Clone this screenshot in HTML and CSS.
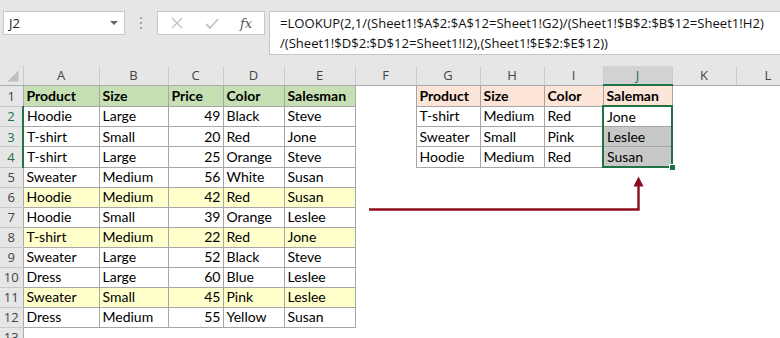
FILE: index.html
```html
<!DOCTYPE html>
<html>
	<head>
		<meta charset="UTF-8">
		<title>LOOKUP</title>
		<link rel="stylesheet" href="styles.css">
	</head>

	<body>
		<div class='app'>
			<div class='formula-bar'>
				<div class='namebox'>
					<span>J2</span>
					<svg class='caret' width='8' height='4' viewBox='0 0 8 4'><path d='M0 0H8L4 4Z' fill='#666'/></svg>
				</div>
				<div class='grip'>
					<svg width='3' height='13' viewBox='0 0 3 13'>
						<rect x='0' y='0' width='2' height='2' fill='#a8a8a8'/>
						<rect x='0' y='5' width='2' height='2' fill='#a8a8a8'/>
						<rect x='0' y='10' width='2' height='2' fill='#a8a8a8'/>
					</svg>
				</div>
				<div class='fxbox'>
					<svg width='12' height='12' viewBox='0 0 12 12'><path d='M1 1L11 11M11 1L1 11' stroke='#c4c4c4' stroke-width='1.4'/></svg>
					<svg width='14' height='11' viewBox='0 0 14 11'><path d='M1 6L5 10L13 1' stroke='#c4c4c4' stroke-width='1.8' fill='none'/></svg>
					<span class='fx'>fx</span>
				</div>
				<div class='formula'>=LOOKUP(2,1/(Sheet1!$A$2:$A$12=Sheet1!G2)/(Sheet1!$B$2:$B$12=Sheet1!H2)<br>/(Sheet1!$D$2:$D$12=Sheet1!I2),(Sheet1!$E$2:$E$12))</div>
			</div>

			<div class='grid-wrap'>
				<table class='sheet'>
					<colgroup>
						<col style='width:23px'><col style='width:76px'><col style='width:69px'><col style='width:55px'>
						<col style='width:61px'><col style='width:71px'><col style='width:61px'><col style='width:64px'>
						<col style='width:64px'><col style='width:59px'><col style='width:69px'><col style='width:64px'>
						<col style='width:64px'>
					</colgroup>
					<tr class='heads'>
						<th class='corner'><span class='tri'></span></th>
						<th>A</th><th>B</th><th>C</th><th>D</th><th>E</th><th>F</th>
						<th>G</th><th>H</th><th>I</th><th class='colsel'>J</th><th>K</th><th>L</th>
					</tr>
					<tr>
						<th class='rn'>1</th>
						<td class='d hg'>Product</td><td class='d hg'>Size</td><td class='d hg'>Price</td><td class='d hg'>Color</td><td class='d hg'>Salesman</td>
						<td></td>
						<td class='d hp'>Product</td><td class='d hp'>Size</td><td class='d hp'>Color</td><td class='d hp'>Saleman</td>
						<td></td><td></td>
					</tr>
					<tr>
						<th class='rn rowsel'>2</th>
						<td class='d'>Hoodie</td><td class='d'>Large</td><td class='d num'>49</td><td class='d'>Black</td><td class='d'>Steve</td>
						<td></td>
						<td class='d'>T-shirt</td><td class='d'>Medium</td><td class='d'>Red</td><td class='d sel sel-top'>Jone</td>
						<td></td><td></td>
					</tr>
					<tr>
						<th class='rn rowsel'>3</th>
						<td class='d'>T-shirt</td><td class='d'>Small</td><td class='d num'>20</td><td class='d'>Red</td><td class='d'>Jone</td>
						<td></td>
						<td class='d'>Sweater</td><td class='d'>Small</td><td class='d'>Pink</td><td class='d sel shade'>Leslee</td>
						<td></td><td></td>
					</tr>
					<tr>
						<th class='rn rowsel'>4</th>
						<td class='d'>T-shirt</td><td class='d'>Large</td><td class='d num'>25</td><td class='d'>Orange</td><td class='d'>Steve</td>
						<td></td>
						<td class='d'>Hoodie</td><td class='d'>Medium</td><td class='d'>Red</td><td class='d sel shade sel-bottom'>Susan</td>
						<td></td><td></td>
					</tr>
					<tr>
						<th class='rn'>5</th>
						<td class='d'>Sweater</td><td class='d'>Medium</td><td class='d num'>56</td><td class='d'>White</td><td class='d'>Susan</td>
						<td></td><td></td><td></td><td></td><td></td><td></td><td></td>
					</tr>
					<tr class='hl'>
						<th class='rn'>6</th>
						<td class='d'>Hoodie</td><td class='d'>Medium</td><td class='d num'>42</td><td class='d'>Red</td><td class='d'>Susan</td>
						<td></td><td></td><td></td><td></td><td></td><td></td><td></td>
					</tr>
					<tr>
						<th class='rn'>7</th>
						<td class='d'>Hoodie</td><td class='d'>Small</td><td class='d num'>39</td><td class='d'>Orange</td><td class='d'>Leslee</td>
						<td></td><td></td><td></td><td></td><td></td><td></td><td></td>
					</tr>
					<tr class='hl'>
						<th class='rn'>8</th>
						<td class='d'>T-shirt</td><td class='d'>Medium</td><td class='d num'>22</td><td class='d'>Red</td><td class='d'>Jone</td>
						<td></td><td></td><td></td><td></td><td></td><td></td><td></td>
					</tr>
					<tr>
						<th class='rn'>9</th>
						<td class='d'>Sweater</td><td class='d'>Large</td><td class='d num'>52</td><td class='d'>Black</td><td class='d'>Steve</td>
						<td></td><td></td><td></td><td></td><td></td><td></td><td></td>
					</tr>
					<tr>
						<th class='rn'>10</th>
						<td class='d'>Dress</td><td class='d'>Large</td><td class='d num'>60</td><td class='d'>Blue</td><td class='d'>Leslee</td>
						<td></td><td></td><td></td><td></td><td></td><td></td><td></td>
					</tr>
					<tr class='hl'>
						<th class='rn'>11</th>
						<td class='d'>Sweater</td><td class='d'>Small</td><td class='d num'>45</td><td class='d'>Pink</td><td class='d'>Leslee</td>
						<td></td><td></td><td></td><td></td><td></td><td></td><td></td>
					</tr>
					<tr>
						<th class='rn'>12</th>
						<td class='d'>Dress</td><td class='d'>Medium</td><td class='d num'>55</td><td class='d'>Yellow</td><td class='d'>Susan</td>
						<td></td><td></td><td></td><td></td><td></td><td></td><td></td>
					</tr>
					<tr>
						<th class='rn'>13</th>
						<td></td><td></td><td></td><td></td><td></td><td></td><td></td><td></td><td></td><td></td><td></td><td></td>
					</tr>
				</table>
			</div>

			<!-- arrow from the source table to the results -->
			<svg class='arrow' width='780' height='338' viewBox='0 0 780 338'>
				<path d='M369 209.5H638.5V185' stroke='#8a0c1e' stroke-width='2.4' fill='none'/>
				<path d='M633.5 186.5H643.5L638.5 176.5Z' fill='#8a0c1e'/>
			</svg>
		</div>
	</body>
</html>
```

FILE: styles.css
```css
body {
	margin: 0;
	background-color: #FFF;
	font-family: Lato, "Open Sans", sans-serif;
}

.app {
	position: relative;
	width: 780px;
	height: 338px;
	overflow: hidden;
}

/* formula bar */

.formula-bar {
	display: flex;
	align-items: flex-start;
	height: 66px;
	box-sizing: border-box;
	padding: 11px 0 0 3px;
	background-color: #E6E6E6;
}

.namebox {
	display: flex;
	align-items: center;
	justify-content: space-between;
	width: 122px;
	height: 24px;
	box-sizing: border-box;
	padding: 0 6px 0 5px;
	background-color: #FFF;
	border: 1px solid #C6C6C6;
	font-family: "Open Sans", sans-serif;
	font-size: 13px;
	color: #222;
}

.grip {
	display: flex;
	justify-content: center;
	align-items: center;
	width: 32px;
	height: 24px;
	padding-left: 1px;
	box-sizing: border-box;
}

.fxbox {
	display: flex;
	align-items: center;
	gap: 22px;
	width: 108px;
	height: 24px;
	box-sizing: border-box;
	padding-left: 13px;
	background-color: #FFF;
	border: 1px solid #C6C6C6;
}

.fx {
	font-family: "DejaVu Serif", serif;
	font-style: italic;
	font-size: 13px;
	color: #555;
	margin-left: -1px;
}

.formula {
	flex: 1;
	margin-left: 4px;
	margin-right: -4px;
	height: 44px;
	box-sizing: border-box;
	padding: 1px 0 0 10px;
	background-color: #FFF;
	border: 1px solid #C6C6C6;
	font-family: "Open Sans", sans-serif;
	font-size: 13.1px;
	line-height: 20px;
	color: #111;
	white-space: nowrap;
}

/* grid */

.grid-wrap {
	width: 780px;
	overflow: hidden;
}

table.sheet {
	border-collapse: collapse;
	table-layout: fixed;
	width: 800px;
	font-size: 14px;
	color: #000;
}

table.sheet th,
table.sheet td {
	height: 19px;
	padding: 0;
	white-space: nowrap;
	overflow: hidden;
}

tr.heads th {
	height: 18px;
	background-color: #E6E6E6;
	border-right: 1px solid #CACACA;
	border-bottom: 1px solid #ABABAB;
	font-family: "Open Sans", sans-serif;
	font-weight: normal;
	font-size: 13px;
	color: #444;
}

tr.heads th.colsel {
	background-color: #D2D2D2;
	color: #217346;
	border-bottom: 2px solid #217346;
}

th.corner {
	position: relative;
}
th.corner .tri {
	position: absolute;
	right: 4px;
	bottom: 3px;
	width: 11px;
	height: 11px;
	background-color: #BEBEBE;
	clip-path: polygon(100% 0, 100% 100%, 0 100%);
}

th.rn {
	background-color: #E6E6E6;
	border-right: 1px solid #ABABAB;
	border-bottom: 1px solid #C8C8C8;
	font-family: "Open Sans", sans-serif;
	font-weight: normal;
	font-size: 13px;
	color: #444;
	text-align: center;
}
th.rn.rowsel {
	border-right: 2px solid #217346;
	color: #217346;
}

table.sheet td.d {
	border: 1px solid #A6A6A6;
	padding: 0 3px;
	line-height: 18px;
}

table.sheet td.num { text-align: right; padding-right: 2px }

td.hg { background-color: #C6E0B4; font-weight: bold }
td.hp { background-color: #FCE4D6; font-weight: bold }
tr.hl td.d { background-color: #FFFFCC }

td.shade { background-color: #C8C8C8 }

table.sheet td.sel {
	position: relative;
	overflow: visible;
	border-left: 2px solid #217346;
	border-right: 2px solid #217346;
}
table.sheet td.sel-top { border-top: 2px solid #217346 }
table.sheet td.sel-bottom { border-bottom: 2px solid #217346 }
td.sel-bottom::after {
	content: '';
	position: absolute;
	right: -5px;
	bottom: -5px;
	width: 5px;
	height: 5px;
	background-color: #217346;
	border: 1px solid #FFF;
}

.arrow {
	position: absolute;
	left: 0;
	top: 0;
	pointer-events: none;
}
```
